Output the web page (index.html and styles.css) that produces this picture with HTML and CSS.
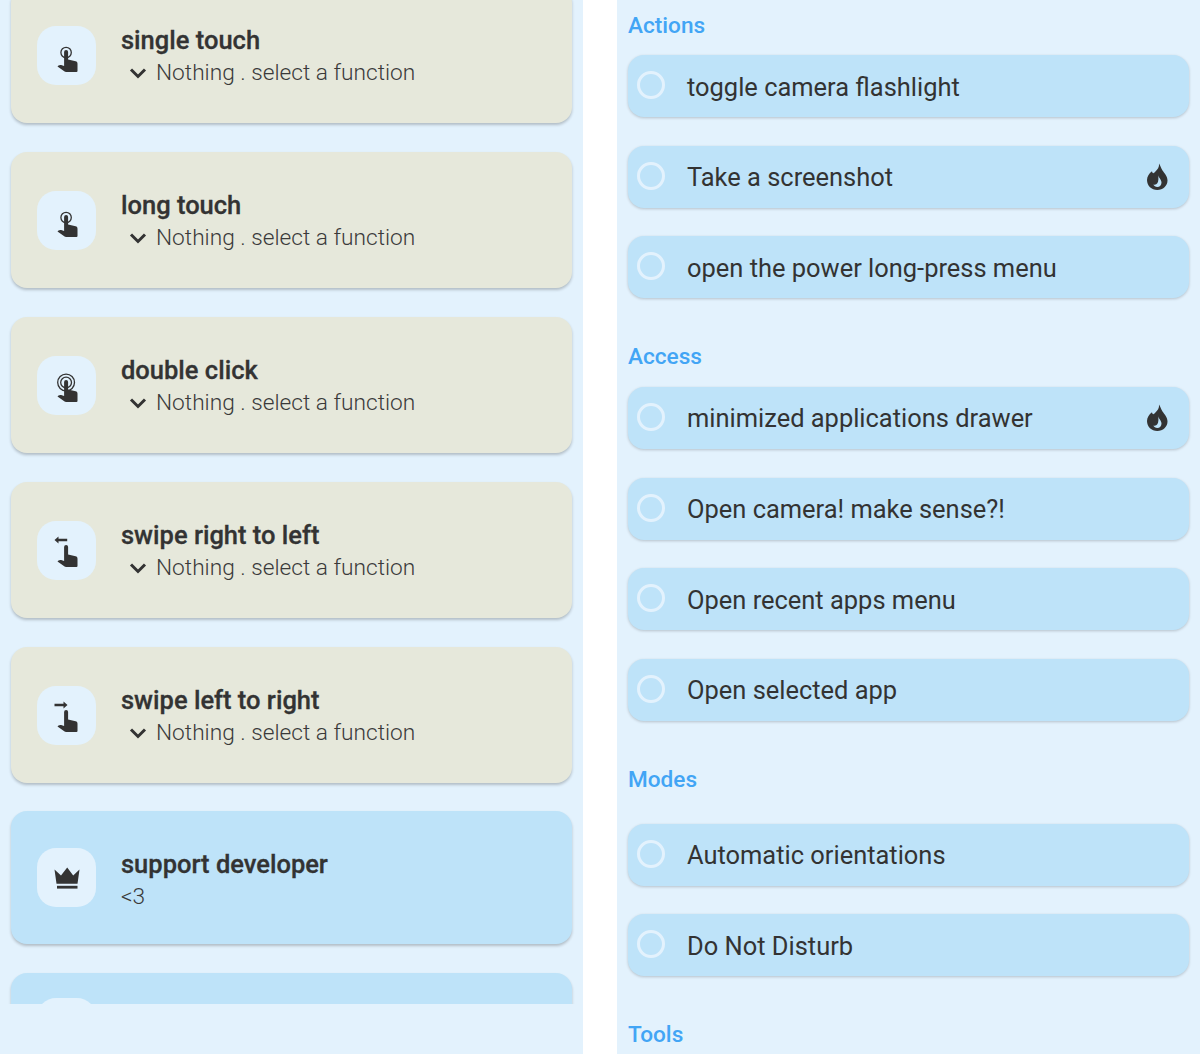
FILE: index.html

```html
<!DOCTYPE html>
<html lang="en">
<head>
  <meta charset="UTF-8" />
  <title>Gesture settings</title>
  <link rel="stylesheet" href="styles.css">
</head>
<body>

<svg class="defs" width="0" height="0">
  <defs>
    <path id="hand" d="M15.100 14a2 2 0 0 1 4 0v7.500l7.500 1.800c1.200.3 1.900 1.200 1.900 2.400V33a1 1 0 0 1-1 1H17c-.6 0-1-.2-1.400-.5L8.500 28.500l1-.9c.8-.6 1.800-.8 2.700-.5l2.900 1z"/>
    <path id="flame" fill-rule="evenodd" d="M16 .5C16.500 4 14.500 6.500 12 9 11 10 10.500 10.500 9.800 10 9.300 9.600 9.100 9 9 8.200 6 10.500 4 13.500 4 17c0 5.800 4.500 10 10.300 10 5.700 0 10.200-4.200 10.200-9.500 0-4.500-3-7-5-10C18 5.300 17.500 3 16 .5zM15 12c.5 2.500 3.500 4.500 3.500 7.500 0 2.500-1.700 4.500-4.200 4.500-1.800 0-3.300-1-4-2.500 1.700.5 3.200 0 4-1.200C15.500 18.500 15.800 15 15 12z"/>
  </defs>
</svg>

<div class="panel">
  <div class="list">
    <div class="card card-tan">
      <div class="tile">
        <svg class="ico" viewBox="0 0 36 36">
          <circle class="ring" cx="17.100" cy="14.500" r="5.200"/>
          <use href="#hand"/>
        </svg>
      </div>
      <div class="info">
        <div class="title">single touch</div>
        <div class="sub"><svg class="chev" viewBox="0 0 18 12"><path d="M2 2.500l7 7 7-7"/></svg>Nothing . select a function</div>
      </div>
    </div>
    <div class="card card-tan">
      <div class="tile">
        <svg class="ico" viewBox="0 0 36 36">
          <circle class="ring" cx="17.100" cy="14.500" r="5.200"/>
          <use href="#hand"/>
        </svg>
      </div>
      <div class="info">
        <div class="title">long touch</div>
        <div class="sub"><svg class="chev" viewBox="0 0 18 12"><path d="M2 2.500l7 7 7-7"/></svg>Nothing . select a function</div>
      </div>
    </div>
    <div class="card card-tan">
      <div class="tile">
        <svg class="ico" viewBox="0 0 36 36">
          <circle class="ring" cx="17.100" cy="14.500" r="5.400"/>
          <circle class="ring" cx="17.100" cy="14.500" r="8.400"/>
          <use href="#hand"/>
        </svg>
      </div>
      <div class="info">
        <div class="title">double click</div>
        <div class="sub"><svg class="chev" viewBox="0 0 18 12"><path d="M2 2.500l7 7 7-7"/></svg>Nothing . select a function</div>
      </div>
    </div>
    <div class="card card-tan">
      <div class="tile">
        <svg class="ico" viewBox="0 0 36 36">
          <path class="solid" d="M5.500 7L9.500 3.500V5.700H18.200V8.300H9.500V10.500z"/>
          <use href="#hand"/>
        </svg>
      </div>
      <div class="info">
        <div class="title">swipe right to left</div>
        <div class="sub"><svg class="chev" viewBox="0 0 18 12"><path d="M2 2.500l7 7 7-7"/></svg>Nothing . select a function</div>
      </div>
    </div>
    <div class="card card-tan">
      <div class="tile">
        <svg class="ico" viewBox="0 0 36 36">
          <path class="solid" d="M18.500 7L14.500 3.500V5.700H5.500V8.300H14.500V10.500z"/>
          <use href="#hand"/>
        </svg>
      </div>
      <div class="info">
        <div class="title">swipe left to right</div>
        <div class="sub"><svg class="chev" viewBox="0 0 18 12"><path d="M2 2.500l7 7 7-7"/></svg>Nothing . select a function</div>
      </div>
    </div>
    <div class="card card-blue card-support">
      <div class="tile">
        <svg class="ico" viewBox="0 0 36 36">
          <path class="solid" d="M5.500 9.500l6.500 6L18.200 7.500l6 8 6.300-6-2 14.300H7.500z"/>
          <rect class="solid" x="8" y="25.800" width="20.500" height="2.800"/>
        </svg>
      </div>
      <div class="info">
        <div class="title">support developer</div>
        <div class="sub sub-plain">&lt;3</div>
      </div>
    </div>
    <div class="card card-blue card-cut">
      <div class="tile"></div>
    </div>
  </div>
</div>

<div class="panel panel-right">
  <div class="group-label group-first">Actions</div>
  <div class="row"><span class="radio"></span><span class="row-text">toggle camera flashlight</span></div>
  <div class="row"><span class="radio"></span><span class="row-text">Take a screenshot</span><svg class="hot" viewBox="0 0 28 28"><use href="#flame"/></svg></div>
  <div class="row"><span class="radio"></span><span class="row-text">open the power long-press menu</span></div>

  <div class="group-label">Access</div>
  <div class="row"><span class="radio"></span><span class="row-text">minimized applications drawer</span><svg class="hot" viewBox="0 0 28 28"><use href="#flame"/></svg></div>
  <div class="row"><span class="radio"></span><span class="row-text">Open camera! make sense?!</span></div>
  <div class="row"><span class="radio"></span><span class="row-text">Open recent apps menu</span></div>
  <div class="row"><span class="radio"></span><span class="row-text">Open selected app</span></div>

  <div class="group-label group-wide">Modes</div>
  <div class="row"><span class="radio"></span><span class="row-text">Automatic orientations</span></div>
  <div class="row"><span class="radio"></span><span class="row-text">Do Not Disturb</span></div>

  <div class="group-label">Tools</div>
</div>

</body>
</html>
```

FILE: styles.css

```css
html, body {
  margin: 0;
  height: 1054px;
  overflow: hidden;
}
body {
  display: flex;
  gap: 34px;
  background-color: #fff;
  color: #333;
  font-family: Roboto, "Liberation Sans", sans-serif;
}
.defs { display: none; }
.panel {
  width: 583px;
  height: 1054px;
  background-color: #e3f2fd;
  overflow: hidden;
}
.list {
  height: 1004px;
  padding: 0 11px;
  overflow: hidden;
}
.card {
  display: flex;
  align-items: flex-start;
  width: 561px;
  height: 136px;
  margin-bottom: 29px;
  padding: 39px 26px 0;
  box-sizing: border-box;
  border-radius: 16px;
  box-shadow: 0 2px 3px rgba(0,0,0,0.22);
}
.card:first-child { margin-top: -13px; }
.card-tan { background-color: #e6e8db; }
.card-blue { background-color: #bee3f9; }
.card-support { height: 133px; margin-top: -1px; padding-top: 37px; }
.card-support .info { margin-top: 1px; }
.card-cut { padding-top: 25px; }
.tile {
  flex: none;
  display: flex;
  align-items: center;
  justify-content: center;
  width: 59px;
  height: 59px;
  border-radius: 19px;
  background-color: #e3f2fd;
}
.ico {
  width: 36px;
  height: 36px;
  fill: #333;
}
.ring {
  fill: none;
  stroke: #333;
  stroke-width: 1.300;
}
.solid { fill: #333; }
.info { margin-left: 25px; margin-top: -1px; }
.title {
  font-size: 25.500px;
  line-height: 30px;
  font-weight: 500;
  -webkit-text-stroke: 0.3px #333;
}
.sub {
  display: flex;
  align-items: center;
  margin-top: 3px;
  margin-left: 8px;
  font-size: 22.700px;
  line-height: 30px;
  font-weight: 300;
  color: #3a3a3a;
}
.sub-plain { margin-left: 0; }
.chev {
  width: 18px;
  height: 12px;
  margin-right: 9px;
  fill: none;
  stroke: #333;
  stroke-width: 3;
}
.panel-right {
  display: flex;
  flex-direction: column;
  padding: 0 11px;
  box-sizing: border-box;
}
.group-label {
  flex: none;
  margin: 16px 0;
  font-size: 22.600px;
  line-height: 28px;
  font-weight: 500;
  color: #42a5f5;
}
.group-first { margin: 12px 0 15px; }
.group-wide { margin-bottom: 30px; }
.row {
  flex: none;
  display: flex;
  align-items: center;
  height: 62px;
  margin-bottom: 28.670px;
  padding: 0 19px 0 9px;
  border-radius: 16px;
  background-color: #bee3f9;
  box-shadow: 0 1px 3px rgba(0,0,0,0.2);
}
.radio {
  flex: none;
  width: 22px;
  height: 22px;
  margin-top: -2px;
  border: 3px solid #e3f2fd;
  border-radius: 50%;
}
.row-text {
  flex: 1;
  margin-left: 22px;
  margin-top: 1px;
  font-size: 25.450px;
  line-height: 30px;
}
.hot {
  width: 28px;
  height: 28px;
  margin-right: -1px;
  fill: #333;
}
```
